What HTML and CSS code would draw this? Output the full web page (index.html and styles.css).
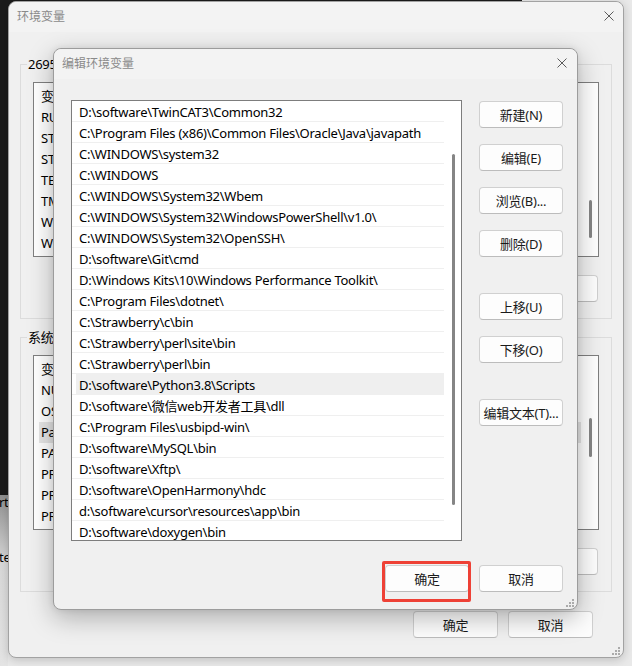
FILE: index.html
```html
<!DOCTYPE html>
<html lang="zh-CN">
<head>
<meta charset="utf-8">
<title>编辑环境变量</title>
<link rel="stylesheet" href="styles.css">
</head>
<body>
<div class="desk-dark"></div>
<div class="desk-win"><span class="dw-t1">rt</span><span class="dw-t2">te</span></div>

<div class="window outer">
  <div class="titlebar">
    <span class="title">环境变量</span>
    <svg class="close" width="10" height="10" viewBox="0 0 10 10"><path d="M0.5 0.5L9.5 9.5M9.5 0.5L0.5 9.5" stroke="#5c5c5c" stroke-width="1"/></svg>
  </div>
  <div class="outer-body">
    <fieldset class="group g1">
      <legend>26951 的用户变量(U)</legend>
      <div class="olist">
        <div class="ocol">
          <div class="ohead">变量</div>
          <div class="orow">RUSTUP_HOME</div>
          <div class="orow">STM32CubeMX</div>
          <div class="orow">STLINK_PATH</div>
          <div class="orow">TEMP</div>
          <div class="orow">TMP</div>
          <div class="orow">WEB_TOOLS</div>
          <div class="orow">WSL_HOME</div>
        </div>
        <div class="oscroll"><div class="othumb t1"></div></div>
      </div>
      <div class="obtns">
        <div class="btn obtn">新建(N)...</div>
        <div class="btn obtn">编辑(E)...</div>
        <div class="btn obtn">删除(D)</div>
      </div>
    </fieldset>
    <fieldset class="group g2">
      <legend>系统变量(S)</legend>
      <div class="olist">
        <div class="ocol">
          <div class="ohead">变量</div>
          <div class="orow">NUMBER_OF_PROCESSORS</div>
          <div class="orow">OS</div>
          <div class="orow sel">Path</div>
          <div class="orow">PATHEXT</div>
          <div class="orow">PROCESSOR_ARCHITECTURE</div>
          <div class="orow">PROCESSOR_IDENTIFIER</div>
          <div class="orow">PROCESSOR_LEVEL</div>
        </div>
        <div class="oscroll"><div class="othumb t2"></div></div>
      </div>
      <div class="obtns">
        <div class="btn obtn">新建(W)...</div>
        <div class="btn obtn">编辑(I)...</div>
        <div class="btn obtn">删除(L)</div>
      </div>
    </fieldset>
    <div class="ofoot">
      <div class="btn obtn">确定</div>
      <div class="btn obtn">取消</div>
    </div>
  </div>
  <svg class="grip" width="8" height="8" viewBox="0 0 8 8"><g fill="#ababab"><rect x="6" y="0" width="2" height="2"/><rect x="3" y="3" width="2" height="2"/><rect x="6" y="3" width="2" height="2"/><rect x="0" y="6" width="2" height="2"/><rect x="3" y="6" width="2" height="2"/><rect x="6" y="6" width="2" height="2"/></g></svg>
</div>

<div class="window inner">
  <div class="titlebar">
    <span class="title">编辑环境变量</span>
    <svg class="close" width="10" height="10" viewBox="0 0 10 10"><path d="M0.5 0.5L9.5 9.5M9.5 0.5L0.5 9.5" stroke="#5c5c5c" stroke-width="1"/></svg>
  </div>
  <div class="inner-body">
    <div class="main">
      <div class="list">
        <div class="rows">
          <div class="row">D:\software\TwinCAT3\Common32</div>
          <div class="row">C:\Program Files (x86)\Common Files\Oracle\Java\javapath</div>
          <div class="row">C:\WINDOWS\system32</div>
          <div class="row">C:\WINDOWS</div>
          <div class="row">C:\WINDOWS\System32\Wbem</div>
          <div class="row">C:\WINDOWS\System32\WindowsPowerShell\v1.0\</div>
          <div class="row">C:\WINDOWS\System32\OpenSSH\</div>
          <div class="row">D:\software\Git\cmd</div>
          <div class="row">D:\Windows Kits\10\Windows Performance Toolkit\</div>
          <div class="row">C:\Program Files\dotnet\</div>
          <div class="row">C:\Strawberry\c\bin</div>
          <div class="row">C:\Strawberry\perl\site\bin</div>
          <div class="row">C:\Strawberry\perl\bin</div>
          <div class="row hover">D:\software\Python3.8\Scripts</div>
          <div class="row">D:\software\微信web开发者工具\dll</div>
          <div class="row">C:\Program Files\usbipd-win\</div>
          <div class="row">D:\software\MySQL\bin</div>
          <div class="row">D:\software\Xftp\</div>
          <div class="row">D:\software\OpenHarmony\hdc</div>
          <div class="row">d:\software\cursor\resources\app\bin</div>
          <div class="row">D:\software\doxygen\bin</div>
        </div>
        <div class="scroll"><div class="thumb"></div></div>
      </div>
      <div class="side">
        <div class="btn">新建(N)</div>
        <div class="btn">编辑(E)</div>
        <div class="btn">浏览(B)...</div>
        <div class="btn">删除(D)</div>
        <div class="btn gap">上移(U)</div>
        <div class="btn">下移(O)</div>
        <div class="btn gap">编辑文本(T)...</div>
      </div>
    </div>
    <div class="foot">
      <div class="btn">确定</div>
      <div class="btn">取消</div>
    </div>
  </div>
  <div class="mark"></div>
  <svg class="grip" width="8" height="8" viewBox="0 0 8 8"><g fill="#ababab"><rect x="6" y="0" width="2" height="2"/><rect x="3" y="3" width="2" height="2"/><rect x="6" y="3" width="2" height="2"/><rect x="0" y="6" width="2" height="2"/><rect x="3" y="6" width="2" height="2"/><rect x="6" y="6" width="2" height="2"/></g></svg>
</div>
</body>
</html>
```
FILE: styles.css
```css
html, body {
  margin: 0;
  padding: 0;
}
body {
  width: 632px;
  height: 666px;
  overflow: hidden;
  position: relative;
  background: #e9e9e9;
  font-family: "Noto Sans", "Noto Sans CJK SC", sans-serif;
  font-size: 13px;
  letter-spacing: -0.25px;
  color: #000;
}
.desk-dark {
  position: absolute;
  left: 0;
  top: 0;
  width: 522px;
  height: 495px;
  background: #1b1b1b;
}
.desk-win {
  position: absolute;
  left: 0;
  top: 495px;
  width: 8px;
  height: 171px;
  overflow: hidden;
  background: linear-gradient(#8f8f8f, #d8d8d8 40%, #e4e4e4);
}
.desk-win span {
  position: absolute;
  left: -1px;
  line-height: 14px;
  font-size: 13px;
}
.dw-t1 { top: 0; }
.dw-t2 { top: 55px; }

.window {
  position: absolute;
  box-sizing: border-box;
  border: 1px solid #a2a2a2;
  border-radius: 8px;
  background: #f0f0f0;
  display: flex;
  flex-direction: column;
}
.titlebar {
  height: 30px;
  box-sizing: border-box;
  flex: none;
  background: #f3f3f3;
  border-radius: 8px 8px 0 0;
  display: flex;
  align-items: center;
  justify-content: space-between;
  padding: 0 10px 3px 8px;
}
.title {
  font-size: 12px;
  letter-spacing: 0;
  color: #8a8a8a;
}
.grip {
  position: absolute;
  right: 3px;
  bottom: 2px;
}

/* outer window */
.outer {
  left: 8px;
  top: 1px;
  width: 616px;
  height: 657px;
  box-shadow: 0 2px 10px rgba(0, 0, 0, 0.18);
}
.outer .titlebar { padding-right: 9px; }
.outer-body {
  padding: 24px 11px 0 11px;
  display: flex;
  flex-direction: column;
}
.group {
  margin: 0;
  border: 1px solid #dcdcdc;
  padding: 9px 12px 16px 12px;
  min-width: 0;
}
.group legend {
  padding: 0 1px;
  margin-left: -6px;
  line-height: 17px;
}
.g2 { margin-top: 10px; }
.olist {
  height: 175px;
  box-sizing: border-box;
  border: 1px solid #7f7f7f;
  background: #fff;
  display: flex;
  overflow: hidden;
}
.ocol {
  flex: 1;
}
.ohead {
  height: 24px;
  line-height: 26px;
  padding-left: 7px;
}
.orow {
  height: 21px;
  line-height: 21px;
  padding-left: 7px;
}
.orow.sel {
  background: linear-gradient(to right, transparent 5px, #e5e5e5 5px);
}
.oscroll {
  width: 17px;
  flex: none;
}
.othumb {
  width: 3px;
  margin-left: 8px;
  background: #858585;
  border-radius: 2px;
}
.t1 { margin-top: 117px; height: 38px; }
.t2 { margin-top: 62px; height: 39px; }
.obtns {
  display: flex;
  justify-content: flex-end;
  gap: 10px;
  margin-top: 18px;
  padding-right: 1px;
}
.btn {
  box-sizing: border-box;
  width: 84px;
  height: 27px;
  border: 1px solid #d0d0d0;
  border-bottom-color: #bcbcbc;
  border-radius: 4px;
  background: #fdfdfd;
  display: flex;
  align-items: center;
  justify-content: center;
  font-size: 13px;
  color: #1a1a1a;
  white-space: nowrap;
}
.obtn { width: 85px; }
.ofoot {
  display: flex;
  justify-content: flex-end;
  gap: 10px;
  margin-top: 19px;
  padding-right: 19px;
}

/* inner window */
.inner {
  left: 53px;
  top: 48px;
  width: 525px;
  height: 562px;
  border-color: #9c9c9c;
  box-shadow: 0 8px 26px rgba(0, 0, 0, 0.28), 0 0 6px rgba(0, 0, 0, 0.08);
}
.inner-body {
  flex: 1;
  display: flex;
  flex-direction: column;
  padding: 21px 14px 17px 17px;
}
.main {
  display: flex;
  gap: 17px;
}
.list {
  width: 391px;
  height: 441px;
  box-sizing: border-box;
  border: 1px solid #7d7d7d;
  background: #fff;
  display: flex;
  overflow: hidden;
}
.rows {
  width: 372px;
  flex: none;
}
.row {
  height: 21px;
  box-sizing: border-box;
  border-bottom: 1px solid #efefef;
  line-height: 20px;
  padding: 1px 0 0 7px;
  white-space: nowrap;
}
.row.hover {
  background: linear-gradient(to right, transparent 4px, #efefef 4px);
}
.scroll {
  width: 17px;
  flex: none;
}
.thumb {
  width: 3px;
  height: 351px;
  margin: 53px 0 0 8px;
  background: #858585;
  border-radius: 2px;
}
.side {
  display: flex;
  flex-direction: column;
  gap: 16px;
  padding-top: 1px;
}
.side .gap { margin-top: 20px; }
.foot {
  margin-top: 24px;
  display: flex;
  justify-content: flex-end;
  gap: 10px;
}
.mark {
  position: absolute;
  left: 328px;
  top: 512px;
  width: 89px;
  height: 41px;
  box-sizing: border-box;
  border: 3px solid #ee4136;
  border-radius: 2px;
}
```
